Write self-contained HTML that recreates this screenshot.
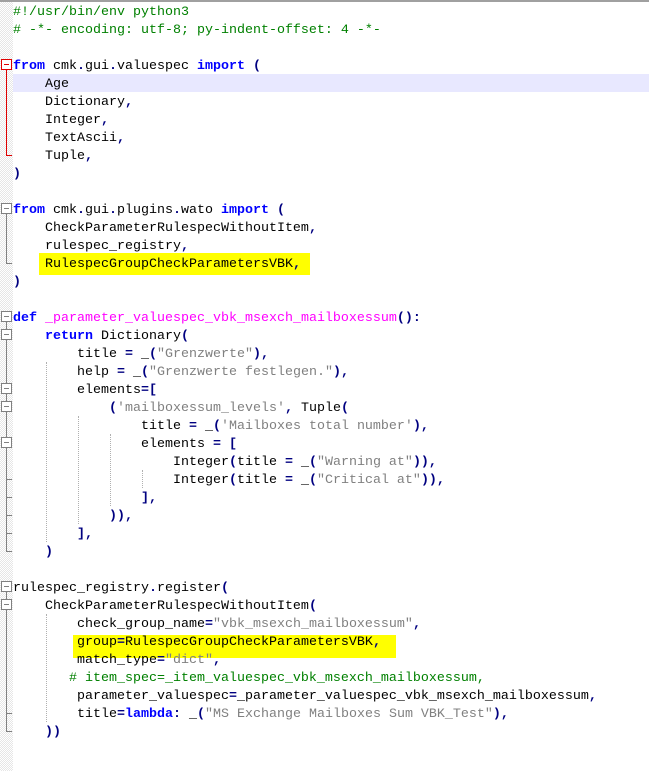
<!DOCTYPE html>
<html><head><meta charset="utf-8">
<style>
html,body{margin:0;padding:0;background:#fff;width:649px;height:771px;overflow:hidden;position:relative}
#top{position:absolute;left:0;top:0;width:649px;height:2px;background:#a0a0a0}
#mg{position:absolute;left:0;top:2px;width:13px;height:769px;background:repeating-conic-gradient(#e6e6e6 0 25%,#fff 0 50%) 0 0/2px 2px}
.l{position:absolute;left:13px;margin-top:2px;height:18px;line-height:18px;font-family:"Liberation Mono",monospace;font-size:13.33px;white-space:pre;color:#000}
.k{color:#0000ff;font-weight:bold}
.o{color:#000080;font-weight:bold}
.s{color:#808080}
.c{color:#008000}
.f{color:#ff00ff}
.hl{position:absolute;background:#ffff00}
.fb{position:absolute;left:1px;width:9px;height:9px;border:1px solid #808080;background:#fff}
.fb::after{content:"";position:absolute;left:2px;top:4px;width:5px;height:1px;background:#808080}
.fb.r{border-color:#e00000}.fb.r::after{background:#e00000}
.vl{position:absolute;left:6px;width:1px;background:#808080}
.tk{position:absolute;left:6px;width:6px;height:1px;background:#808080}
.red{background:#e00000}
.ig{position:absolute;width:0;border-left:1px dotted #b0b0b0}
</style></head><body>
<div id="top"></div>
<div id="mg"></div>
<div style="position:absolute;left:13px;top:74px;width:636px;height:18px;background:#e8e8ff"></div>
<div class="hl" style="left:39px;top:253px;width:271px;height:22px"></div>
<div class="hl" style="left:73px;top:635px;width:323px;height:23px"></div>

<div class="vl red" style="top:70px;height:85px"></div><div class="tk red" style="top:155px"></div>
<div class="fb r" style="top:59px"></div>
<div class="vl" style="top:214px;height:49px"></div><div class="tk" style="top:263px"></div>
<div class="fb" style="top:203px"></div>
<div class="vl" style="top:322px;height:229px"></div>
<div class="fb" style="top:311px"></div><div class="fb" style="top:329px"></div>
<div class="fb" style="top:383px"></div><div class="fb" style="top:401px"></div><div class="fb" style="top:437px"></div>
<div class="tk" style="top:479px"></div><div class="tk" style="top:497px"></div><div class="tk" style="top:515px"></div><div class="tk" style="top:533px"></div><div class="tk" style="top:551px"></div>
<div class="vl" style="top:592px;height:139px"></div>
<div class="fb" style="top:581px"></div><div class="fb" style="top:599px"></div>
<div class="tk" style="top:713px"></div><div class="tk" style="top:731px"></div>

<div class="ig" style="left:46px;top:362px;height:180px"></div>
<div class="ig" style="left:78px;top:416px;height:108px"></div>
<div class="ig" style="left:110px;top:434px;height:72px"></div>
<div class="ig" style="left:142px;top:470px;height:18px"></div>
<div class="ig" style="left:46px;top:614px;height:108px"></div>

<div class="l c" style="top:2px">#!/usr/bin/env python3</div>
<div class="l c" style="top:20px"># -*- encoding: utf-8; py-indent-offset: 4 -*-</div>
<div class="l" style="top:56px"><span class="k">from</span> cmk<span class="o">.</span>gui<span class="o">.</span>valuespec <span class="k">import</span> <span class="o">(</span></div>
<div class="l" style="top:74px">    Age</div>
<div class="l" style="top:92px">    Dictionary<span class="o">,</span></div>
<div class="l" style="top:110px">    Integer<span class="o">,</span></div>
<div class="l" style="top:128px">    TextAscii<span class="o">,</span></div>
<div class="l" style="top:146px">    Tuple<span class="o">,</span></div>
<div class="l" style="top:164px"><span class="o">)</span></div>
<div class="l" style="top:200px"><span class="k">from</span> cmk<span class="o">.</span>gui<span class="o">.</span>plugins<span class="o">.</span>wato <span class="k">import</span> <span class="o">(</span></div>
<div class="l" style="top:218px">    CheckParameterRulespecWithoutItem<span class="o">,</span></div>
<div class="l" style="top:236px">    rulespec_registry<span class="o">,</span></div>
<div class="l" style="top:254px">    RulespecGroupCheckParametersVBK<span class="o">,</span></div>
<div class="l" style="top:272px"><span class="o">)</span></div>
<div class="l" style="top:308px"><span class="k">def</span> <span class="f">_parameter_valuespec_vbk_msexch_mailboxessum</span><span class="o">():</span></div>
<div class="l" style="top:326px">    <span class="k">return</span> Dictionary<span class="o">(</span></div>
<div class="l" style="top:344px">        title <span class="o">=</span> _<span class="o">(</span><span class="s">"Grenzwerte"</span><span class="o">),</span></div>
<div class="l" style="top:362px">        help <span class="o">=</span> _<span class="o">(</span><span class="s">"Grenzwerte festlegen."</span><span class="o">),</span></div>
<div class="l" style="top:380px">        elements<span class="o">=[</span></div>
<div class="l" style="top:398px">            <span class="o">(</span><span class="s">'mailboxessum_levels'</span><span class="o">,</span> Tuple<span class="o">(</span></div>
<div class="l" style="top:416px">                title <span class="o">=</span> _<span class="o">(</span><span class="s">'Mailboxes total number'</span><span class="o">),</span></div>
<div class="l" style="top:434px">                elements <span class="o">=</span> <span class="o">[</span></div>
<div class="l" style="top:452px">                    Integer<span class="o">(</span>title <span class="o">=</span> _<span class="o">(</span><span class="s">"Warning at"</span><span class="o">)),</span></div>
<div class="l" style="top:470px">                    Integer<span class="o">(</span>title <span class="o">=</span> _<span class="o">(</span><span class="s">"Critical at"</span><span class="o">)),</span></div>
<div class="l" style="top:488px">                <span class="o">],</span></div>
<div class="l" style="top:506px">            <span class="o">)),</span></div>
<div class="l" style="top:524px">        <span class="o">],</span></div>
<div class="l" style="top:542px">    <span class="o">)</span></div>
<div class="l" style="top:578px">rulespec_registry<span class="o">.</span>register<span class="o">(</span></div>
<div class="l" style="top:596px">    CheckParameterRulespecWithoutItem<span class="o">(</span></div>
<div class="l" style="top:614px">        check_group_name<span class="o">=</span><span class="s">"vbk_msexch_mailboxessum"</span><span class="o">,</span></div>
<div class="l" style="top:632px">        group<span class="o">=</span>RulespecGroupCheckParametersVBK<span class="o">,</span></div>
<div class="l" style="top:650px">        match_type<span class="o">=</span><span class="s">"dict"</span><span class="o">,</span></div>
<div class="l c" style="top:668px">       # item_spec=_item_valuespec_vbk_msexch_mailboxessum,</div>
<div class="l" style="top:686px">        parameter_valuespec<span class="o">=</span>_parameter_valuespec_vbk_msexch_mailboxessum<span class="o">,</span></div>
<div class="l" style="top:704px">        title<span class="o">=</span><span class="k">lambda</span><span class="o">:</span> _<span class="o">(</span><span class="s">"MS Exchange Mailboxes Sum VBK_Test"</span><span class="o">),</span></div>
<div class="l" style="top:722px">    <span class="o">))</span></div>
</body></html>
